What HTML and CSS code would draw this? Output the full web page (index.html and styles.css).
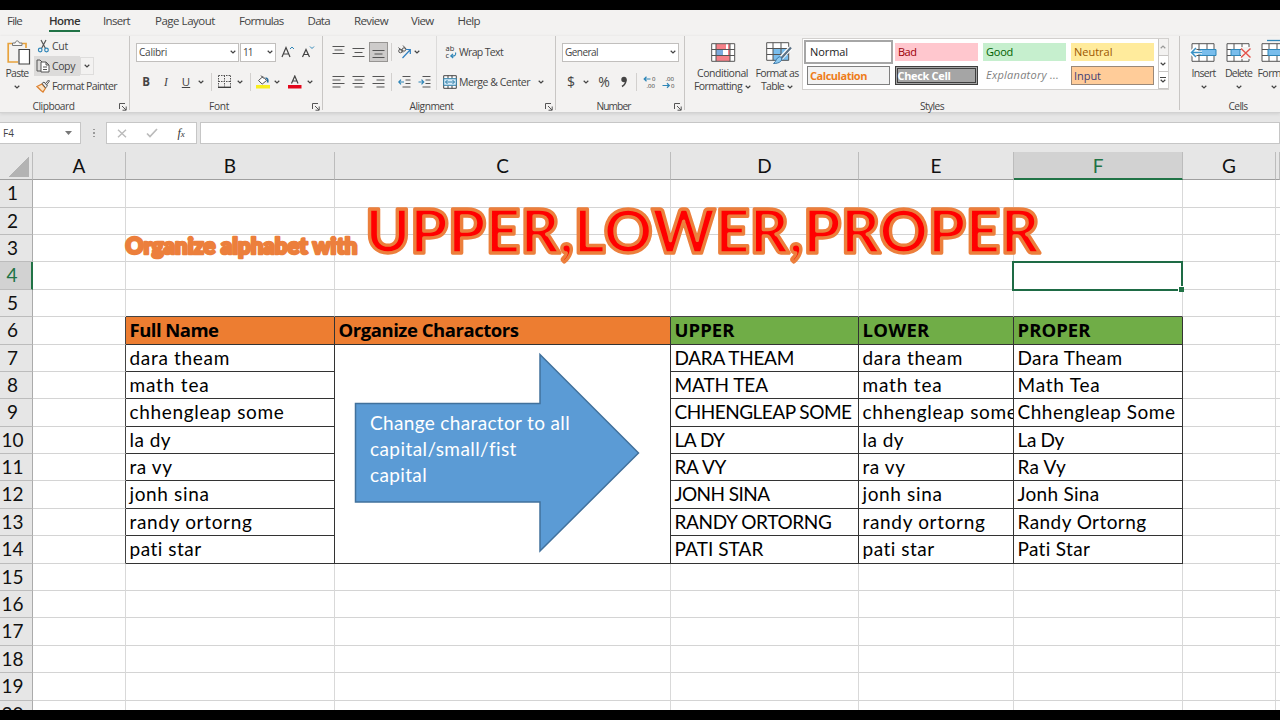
FILE: index.html
```html
<!DOCTYPE html>
<html lang="en">
<head>
<meta charset="utf-8">
<title>Organize alphabet</title>
<link rel="stylesheet" href="styles.css">
</head>
<body>
<svg class="defs" width="0" height="0">
  <symbol id="chev" viewBox="0 0 6 4"><path d="M.7.7 3 2.9 5.3.7" fill="none" stroke="#444" stroke-width="1.2"/></symbol>
  <symbol id="launch" viewBox="0 0 8 8"><path d="M.5 6V.5H6M3 3l4 4M7.2 3.5v3.7H3.500" fill="none" stroke="#555"/></symbol>
</svg>
<div class="screen">
  <nav class="tabs">
    <span data-w="15">File</span><span class="tab-on" data-w="31">Home</span><span class="tab-insert" data-w="27">Insert</span><span class="tab-page" data-w="60">Page Layout</span><span data-w="44.5">Formulas</span><span data-w="22.5">Data</span><span data-w="34">Review</span><span class="tab-view" data-w="22.500">View</span><span data-w="22.500">Help</span>
  </nav>

  <div class="ribbon">
    <section class="group g-clip">
      <div class="body">
        <div class="paste">
          <svg width="24" height="26" viewBox="0 0 24 26"><path d="M5 3.500H1.200V22H11M15 3.500h4V8" fill="none" stroke="#e8a33d" stroke-width="1.700"/><path d="M5.500 5.500V3h2.700C8.500.2 12 .2 12.300 3H15v2.500z" fill="#f7f7f7" stroke="#777"/><path d="M12 9.500h10.500V24H12z" fill="#fff" stroke="#444" stroke-width="1.200"/></svg>
          <span data-w="23">Paste</span>
          <svg class="chev"><use href="#chev"/></svg>
        </div>
        <div class="clip-rows">
          <div class="clip-row"><svg width="14" height="14" viewBox="0 0 14 14"><path d="M5 1l4.500 8.500M10 1 5.500 9.500" fill="none" stroke="#555" stroke-width="1.200"/><g fill="none" stroke="#2f86b8" stroke-width="1.200"><circle cx="4.200" cy="11" r="1.800"/><circle cx="10.500" cy="11" r="1.800"/></g></svg><span data-w="16">Cut</span></div>
          <div class="clip-row copy"><svg width="14" height="14" viewBox="0 0 14 14"><path d="M5 12H1V1h3l2 2" fill="none" stroke="#555"/><path d="M5 3h5l3 3v7H5zM10 3v3h3M7 8h4M7 10.500h4" fill="#fff" stroke="#555"/></svg><span data-w="23">Copy</span><i class="copy-more"><svg class="chev"><use href="#chev"/></svg></i></div>
          <div class="clip-row"><svg width="14" height="14" viewBox="0 0 14 14"><path d="M1 7.500 6 5l3.500 4L7 13 5 11.500z" fill="#fbe3c4" stroke="#dd8230" stroke-width="1.300"/><path d="M6 4.500 8 3l3.500 4-2 1.800zM9.500 4.500 12.500 1l1 1-3 4" fill="#eee" stroke="#555"/></svg><span data-w="65">Format Painter</span></div>
        </div>
      </div>
      <div class="caption"><span data-w="42">Clipboard</span><svg class="launch"><use href="#launch"/></svg></div>
    </section>

    <section class="group g-font">
      <div class="body stack">
        <div class="line font-top">
          <div class="combo"><span data-w="28">Calibri</span><svg class="chev"><use href="#chev"/></svg></div>
          <div class="combo"><span data-w="9.500">11</span><svg class="chev"><use href="#chev"/></svg></div>
          <svg width="14" height="14" viewBox="0 0 14 14"><path d="M1 12 5 2.500 9 12M2.300 9h5.400" fill="none" stroke="#444" stroke-width="1.200"/><path d="M9 4l2-2 2 2" fill="none" stroke="#2f86b8"/></svg>
          <svg width="14" height="14" viewBox="0 0 14 14"><path d="M1.500 12 5 4.500 8.500 12M2.500 9.500h5" fill="none" stroke="#444" stroke-width="1.200"/><path d="M9 1.500l2 2 2-2" fill="none" stroke="#2f86b8"/></svg>
        </div>
        <div class="line font-tools">
          <b>B</b><em>I</em><u>U</u><svg class="chev"><use href="#chev"/></svg><i class="bar"></i>
          <svg width="13" height="13" viewBox="0 0 13 13"><path d="M.5.500h12M.5.500v11M12.500.500v11M6.500.500v11M.5 6.500h12" fill="none" stroke="#555" stroke-dasharray="1.500 1"/><path d="M0 12.300h13" stroke="#333" stroke-width="1.300"/></svg>
          <svg class="chev"><use href="#chev"/></svg><i class="bar"></i>
          <svg width="14" height="14" viewBox="0 0 14 14"><path d="M0 10h14v3.500H0z" fill="#f8ee1f"/><path d="M2.500 5.500 7 1.500l3.500 4-4.300 3.600zM5 .5l2.500 3" fill="#fff" stroke="#555"/><path d="M9.500 3c2 0 2.500 1.500 2.200 4.500" fill="none" stroke="#2b6c99" stroke-width="1.700"/></svg>
          <svg class="chev"><use href="#chev"/></svg>
          <svg width="14" height="14" viewBox="0 0 14 14"><path d="M0 10h13.500v3.500H0z" fill="#e3061b"/><path d="M3.500 8.500 6.800 1 10 8.500M4.500 6h4.600" fill="none" stroke="#444" stroke-width="1.200"/></svg>
          <svg class="chev"><use href="#chev"/></svg>
        </div>
      </div>
      <div class="caption"><span data-w="20">Font</span><svg class="launch"><use href="#launch"/></svg></div>
    </section>

    <section class="group g-align">
      <div class="body">
        <div class="align-left">
          <div class="line align-a">
            <svg width="13" height="14" viewBox="0 0 13 14"><path d="M.5 1.500h12M2.500 5h8M.5 8.500h12" stroke="#555"/></svg>
            <svg width="13" height="14" viewBox="0 0 13 14"><path d="M.5 3.500h12M2.500 7.500h8M.5 11.500h12" stroke="#555"/></svg>
            <i class="pressed"><svg width="13" height="14" viewBox="0 0 13 14"><path d="M.5 5.500h12M2.500 9h8M.5 12.500h12" stroke="#555"/></svg></i>
            <i class="bar"></i>
            <svg width="15" height="14" viewBox="0 0 15 14"><g fill="none" stroke="#555"><circle cx="3.500" cy="6" r="1.800"/><path d="M1.500 2.500 6 7.500M6 .500l4 4.500"/><circle cx="7" cy="4.500" r="1.700"/></g><path d="M5.500 13 13 5M13.300 9V4.500H9" fill="none" stroke="#2f7fc1" stroke-width="1.200"/></svg>
            <svg class="chev"><use href="#chev"/></svg>
          </div>
          <div class="line align-b">
            <svg width="13" height="14" viewBox="0 0 13 14"><path d="M.5 1.500h12M.5 5h8M.5 8.500h12M.5 12h8" stroke="#555"/></svg>
            <svg width="13" height="14" viewBox="0 0 13 14"><path d="M.5 1.500h12M2.500 5h8M.5 8.500h12M2.500 12h8" stroke="#555"/></svg>
            <svg width="13" height="14" viewBox="0 0 13 14"><path d="M.5 1.500h12M4.500 5h8M.5 8.500h12M4.500 12h8" stroke="#555"/></svg>
            <i class="bar"></i>
            <svg width="13" height="14" viewBox="0 0 13 14"><path d="M4.500 1.500h8M7.500 5h5M7.500 8.500h5M4.500 12h8" stroke="#555"/><path d="M6 7H.8M3 4.700.8 7 3 9.300" fill="none" stroke="#2f86b8" stroke-width="1.200"/></svg>
            <svg width="13" height="14" viewBox="0 0 13 14"><path d="M4.500 1.500h8M7.500 5h5M7.500 8.500h5M4.500 12h8" stroke="#555"/><path d="M.5 7h5M3.500 4.700 5.700 7 3.500 9.300" fill="none" stroke="#2f86b8" stroke-width="1.200"/></svg>
          </div>
        </div>
        <div class="align-right">
          <div class="line wrap">
            <svg width="14" height="14" viewBox="0 0 14 14"><text x="2.500" y="6" class="mini">ab</text><text x="2.500" y="12.500" class="mini">c</text><path d="M12.500 7.500c1 3-1 4-4.500 3.500M10 8.800 7.800 11l2.400 2" fill="none" stroke="#2f86b8" stroke-width="1.200"/></svg>
            <span data-w="44">Wrap Text</span>
          </div>
          <div class="line merge">
            <svg width="14" height="14" viewBox="0 0 14 14"><path d="M.7.700h12.600v12.600H.7zM5 .5v3M9 .5v3M5 10.500v3M9 10.500v3" fill="#fff" stroke="#444"/><path d="M.7 3.700h12.600v6.600H.7z" fill="#d8edfa" stroke="#2f7fa8"/><path d="M2.500 7h9M4.500 5 2.500 7l2 2M9.500 5l2 2-2 2" fill="none" stroke="#2f7fa8"/></svg>
            <span data-w="71">Merge &amp; Center</span><svg class="chev"><use href="#chev"/></svg>
          </div>
        </div>
      </div>
      <div class="caption"><span data-w="44">Alignment</span><svg class="launch"><use href="#launch"/></svg></div>
    </section>

    <section class="group g-num">
      <div class="body stack">
        <div class="line"><div class="combo"><span data-w="33">General</span><svg class="chev"><use href="#chev"/></svg></div></div>
        <div class="line num-tools">
          <span class="sym">$</span><svg class="chev"><use href="#chev"/></svg><span class="sym">%</span>
          <svg width="8" height="12" viewBox="0 0 8 12"><circle cx="4" cy="3.500" r="2.700" fill="#444"/><path d="M6 3.500C6 7 4.500 9 2 10.500" fill="none" stroke="#444" stroke-width="1.500"/></svg>
          <i class="bar"></i>
          <svg width="14" height="14" viewBox="0 0 14 14"><text x="9" y="6" class="mini">0</text><text x="3.500" y="13" class="mini">.00</text><path d="M7.500 4H1M3.500 1.800 1.200 4l2.300 2.200" fill="none" stroke="#2f86b8" stroke-width="1.200"/></svg>
          <svg width="14" height="14" viewBox="0 0 14 14"><text x="3.500" y="6" class="mini">.00</text><text x="9" y="13" class="mini">0</text><path d="M.500 10.500h6.500M5 8.300l2.300 2.200L5 12.700" fill="none" stroke="#2f86b8" stroke-width="1.200"/></svg>
        </div>
      </div>
      <div class="caption"><span data-w="34">Number</span><svg class="launch"><use href="#launch"/></svg></div>
    </section>

    <section class="group g-styles">
      <div class="body">
        <div class="big cond">
          <svg width="25" height="22" viewBox="0 0 25 22"><path d="M.7 1.700h23v17.600H.7z" fill="#fff"/><path d="M5 2h10v5H5zM5 14h12v5H5z" fill="#f58088"/><path d="M5 7h7v7H5z" fill="#7ba9dc"/><path d="M17 1.500h2v18h-2z" fill="#f58088"/><path d="M.7 1.700h23v17.600H.7zM.7 7.500h23M.7 13.500h23M5 1.700v17.600M19 1.700v17.600" fill="none" stroke="#555"/></svg>
          <span data-w="51">Conditional</span>
          <span class="more"><span data-w="48">Formatting</span><svg class="chev"><use href="#chev"/></svg></span>
        </div>
        <div class="big fmt">
          <svg width="26" height="24" viewBox="0 0 26 24"><path d="M.7 1.700h22v17.600H.7z" fill="#fff"/><path d="M7 7.500h16v12H7z" fill="#79bdec"/><path d="M.7 1.700h22v17.600H.7zM.7 7.500h22M.7 13.500h22M7 1.700v17.600M15 1.700v17.600" fill="none" stroke="#555"/><path d="M24.500 7 15 17" stroke="#fff" stroke-width="4.500"/><path d="M25 6.500 15 17.500" stroke="#5b7286" stroke-width="2.200"/><path d="M14 15.500c3 1.500 2.500 7-6.500 7 3-2 2.500-6 6.500-7z" fill="#8ecbf2" stroke="#3c78a8"/></svg>
          <span data-w="43">Format as</span>
          <span class="more"><span data-w="23">Table</span><svg class="chev"><use href="#chev"/></svg></span>
        </div>
        <div class="gallery">
          <div class="swatches">
            <span class="sw normal"><span data-w="38">Normal</span></span><span class="sw bad"><span data-w="18.500">Bad</span></span><span class="sw good"><span data-w="27">Good</span></span><span class="sw neutral"><span data-w="38.500">Neutral</span></span>
            <span class="sw calc"><span data-w="57">Calculation</span></span><span class="sw check"><span data-w="53">Check Cell</span></span><span class="sw expl"><span data-w="73">Explanatory ...</span></span><span class="sw input"><span data-w="27">Input</span></span>
          </div>
          <div class="scroller"><i class="off"><svg class="chev flip"><use href="#chev"/></svg></i><i><svg class="chev"><use href="#chev"/></svg></i><i class="last"><svg class="chev"><use href="#chev"/></svg></i></div>
        </div>
      </div>
      <div class="caption"><span data-w="24">Styles</span></div>
    </section>

    <section class="group g-cells">
      <div class="body">
        <div class="big">
          <svg width="27" height="22" viewBox="0 0 27 22"><path d="M2 1.700h22v17.600H2zM9 1.700v17.600M17 1.700v17.600M2 7.500h22M2 13.500h22" fill="#fff" stroke="#555"/><path d="M10 7.500h16v6H10z" fill="#79bdec" stroke="#2f86b8"/><path d="M12 10.500H1.500M6 5.500l-5 5 5 5" fill="none" stroke="#fff" stroke-width="3.500"/><path d="M12 10.500H1.500M6 6l-4.500 4.500L6 15" fill="none" stroke="#3a93c6" stroke-width="1.500"/></svg>
          <span data-w="24">Insert</span><svg class="chev"><use href="#chev"/></svg>
        </div>
        <div class="big">
          <svg width="27" height="22" viewBox="0 0 27 22"><path d="M2 1.700h22v17.600H2zM9 1.700v17.600M17 1.700v17.600M2 7.500h22M2 13.500h22" fill="#fff" stroke="#555"/><path d="M6 7.500h9v6H6z" fill="#79bdec" stroke="#2f86b8"/><path d="M16 5h10v12H16z" fill="#f3f2f1"/><path d="M16 6.500l9.500 9M25.500 6.500l-9.500 9" stroke="#e5534b" stroke-width="1.400"/></svg>
          <span data-w="27">Delete</span><svg class="chev"><use href="#chev"/></svg>
        </div>
        <div class="big">
          <svg width="27" height="26" viewBox="0 -4 27 26"><path d="M2 1.700h22v17.600H2zM9 1.700v17.600M17 1.700v17.600M2 7.500h22M2 13.500h22" fill="#fff" stroke="#555"/><path d="M8 7.500h16v6H8z" fill="#79bdec" stroke="#2f86b8"/><path d="M7 -1.500h18" stroke="#2f86b8" stroke-width="1.300"/></svg>
          <span data-w="32">Format</span><svg class="chev"><use href="#chev"/></svg>
        </div>
      </div>
      <div class="caption"><span data-w="19">Cells</span></div>
    </section>
  </div>

  <div class="formula">
    <div class="namebox"><span data-w="11">F4</span><svg width="7" height="4" viewBox="0 0 7 4"><path d="M0 0h7L3.500 4z" fill="#777"/></svg></div>
    <div class="grip"><i></i><i></i><i></i></div>
    <div class="fx">
      <svg width="10" height="9" viewBox="0 0 10 9"><path d="M1 .7 9 8.300M9 .7 1 8.300" stroke="#bbb" stroke-width="1.400"/></svg>
      <svg width="12" height="10" viewBox="0 0 12 10"><path d="M1 5.500 4 8.500 11 1" fill="none" stroke="#bbb" stroke-width="1.700"/></svg>
      <span class="fx-mark">f<small>x</small></span>
    </div>
    <div class="entry"></div>
  </div>

  <div class="sheet">
    <div class="grid" id="grid"></div>
    <svg class="wordart" width="940" height="80" viewBox="0 0 940 80">
      <text class="wa-small" x="5.500" y="53.500" textLength="232" lengthAdjust="spacingAndGlyphs">Organize alphabet with</text>
      <text class="wa-big" x="245.500" y="53" textLength="674" lengthAdjust="spacingAndGlyphs">UPPER,LOWER,PROPER</text>
    </svg>
    <div class="arrow">
      <svg width="288" height="202" viewBox="0 0 288 202"><path d="M1.500 51.500H186V2.500L284.500 101 186 199V150H1.500z" fill="#5b9bd5" stroke="#41719c" stroke-width="1.500"/></svg>
      <div class="arrow-text"><span data-w="200">Change charactor to all</span><span data-w="146.500">capital/small/fist</span><span data-w="57">capital</span></div>
    </div>
    <div class="cursor"></div>
  </div>
</div>
<script src="sheet.js"></script>
</body>
</html>
```
FILE: styles.css
```css
* { box-sizing: border-box; }
body { margin: 0; background: #000; font-family: "Open Sans", "Noto Sans", sans-serif; font-size: 10.5px; color: #444; overflow: hidden; }
.defs { position: absolute; }
i { font-style: normal; }
svg { display: block; flex: none; }
[data-w] { display: inline-block; white-space: nowrap; flex: none; }
.chev { width: 6px; height: 4px; }
.screen { width: 1280px; height: 720px; border-top: 10px solid #000; border-bottom: 10px solid #000; background: #e6e6e6; overflow: hidden; display: flex; flex-direction: column; }

.tabs { height: 26px; flex: none; display: flex; gap: 24px; padding-left: 7px; background: #f3f2f1; font-size: 11.5px; line-height: 22px; }
.tabs span { height: 22px; }
.tabs .tab-on { margin-left: 3px; font-weight: 600; border-bottom: 2px solid #217346; color: #333; }
.tab-insert, .tab-view { margin-left: -1px; }
.tab-page { margin-left: 1px; }

.ribbon { height: 77px; flex: none; display: flex; background: #f3f2f1; border-bottom: 1px solid #d2d2d2; box-shadow: 0 1px 3px #cfcfcf; }
.group { flex: none; position: relative; display: flex; flex-direction: column; border-right: 1px solid #c8c6c4; height: 74px; }
.body { height: 60px; flex: none; display: flex; }
.stack { flex-direction: column; }
.caption { height: 20px; flex: none; line-height: 20px; text-align: center; font-size: 10.2px; display: flex; justify-content: center; }
.launch { position: absolute; right: 2px; bottom: -1px; width: 8px; height: 8px; }
.g-clip { width: 130px; } .g-font { width: 193px; } .g-align { width: 233px; }
.g-num { width: 129px; } .g-styles { width: 495px; } .g-cells { width: 120px; border: 0; }
.g-clip .caption { padding-right: 22px; }
.g-font .caption { padding-right: 15px; }
.g-align .caption { padding-right: 15px; }
.g-num .caption { padding-right: 14px; }
.g-num .caption, .g-font .caption { padding-left: 1px; }
.g-cells .caption { padding-right: 4px; }

.paste { width: 34px; display: flex; flex-direction: column; align-items: center; padding-top: 4px; }
.paste svg:first-child { margin-left: 3px; }
.paste span { line-height: 15px; margin-top: 0; }
.paste .chev { margin-top: 4px; }
.clip-row { height: 20px; display: flex; align-items: center; padding-left: 2px; }
.clip-row > svg { margin-right: 2px; }
.copy { background: linear-gradient(90deg, #dcdbda 46px, #f3f2f1 46px); width: 61px; }
.copy-more { margin-left: 5px; width: 14px; height: 18px; border: 1px solid #dedddc; display: grid; place-items: center; }

.line { height: 27px; display: flex; align-items: center; flex: none; }
.line:first-child { height: 32px; }
.font-top { padding-left: 6px; }
.combo { height: 19px; background: #fff; border: 1px solid #c1bfbd; display: flex; align-items: center; justify-content: space-between; padding: 0 2px; font-size: 10px; }
.font-top .combo:nth-child(1) { width: 103px; margin-right: 1px; }
.font-top .combo:nth-child(2) { width: 36px; margin-right: 5px; }
.font-top > svg:nth-child(3) { margin-right: 6px; }
.g-num .combo { width: 117px; margin-left: 6px; }
.font-tools, .align-a, .align-b, .num-tools { display: grid; justify-items: center; }
.font-tools { padding-left: 9px; grid-template-columns: 14px 26px 14px 16px 5px 21px 9px 12px 14px 14px 22px 8px; font-size: 11.5px; }
.font-tools em { font-family: "Liberation Serif", serif; }
.align-left { width: 114px; border-right: 1px solid #dcdbda; height: 54px; padding-left: 5px; }
.align-a { grid-template-columns: 20px 20px 20px 7px 19px 6px; }
.align-b { grid-template-columns: 20px 20px 20px 7px 19px 20px; }
.pressed { width: 19px; height: 20px; border: 1px solid #979593; background: #cdcbca; display: grid; place-items: center; }
.bar { width: 1px; height: 18px; background: #d2d0ce; }
.align-right { padding-left: 6px; }
.wrap svg, .merge svg:first-child { margin-right: 2px; }
.merge .chev { margin-left: 8px; }
.mini { font: 6px "Open Sans", sans-serif; fill: #333; }
.wrap .mini { font-size: 7.500px; }
.num-tools { padding-left: 6px; grid-template-columns: 18px 12px 24px 16px 9px 17px 22px; }
.sym { font-size: 14px; line-height: 20px; }

.big { display: flex; flex-direction: column; align-items: center; padding-top: 5px; line-height: 13px; }
.big > svg:first-child { height: 24px; }
.big > span { margin-top: 2px; }
.big > .more { margin-top: 0; }
.more { display: flex; align-items: center; gap: 3px; }
.cond { width: 75px; }
.cond > svg:first-child { margin-left: 1px; }
.fmt { width: 34px; overflow: visible; }
.fmt > svg:first-child { margin-left: 3px; }
.g-cells .big { width: 35px; }
.g-cells .body { padding-left: 6px; }
.g-cells .big > .chev { margin-top: 5px; }
.g-cells .big:nth-child(3) svg:first-child { height: 28px; margin-top: -4px; }
.gallery { margin: 2px 0 0 8px; width: 367px; height: 52px; background: #fff; border: 1px solid #d2d0ce; display: flex; justify-content: space-between; }
.swatches { display: grid; grid-template-columns: repeat(4, 83px); grid-template-rows: 18px 19px; gap: 5px; padding: 4px 4px 4px 3.500px; }
.sw { padding-left: 3.500px; line-height: 17px; font-size: 11px; height: 100%; }
.normal { outline: 2px solid #a6a6a6; outline-offset: 1px; color: #222; }
.bad { background: #ffc7ce; color: #9c0006; }
.good { background: #c6efce; color: #006100; }
.neutral { background: #ffeb9c; color: #9c5700; }
.calc { background: #f2f2f2; border: 1px solid #7f7f7f; color: #ee7d1a; font-weight: 700; padding-left: 2.500px; }
.check { background: #a5a5a5; border: 3px double #3f3f3f; color: #fff; font-weight: 700; line-height: 13px; padding-left: 0; }
.expl { color: #7f7f7f; font-style: italic; }
.input { background: #ffcc99; border: 1px solid #9a8878; color: #3f3f76; padding-left: 2.500px; }
.scroller { width: 11px; display: grid; grid-template-rows: 17px 16px 17px; border-left: 1px solid #c8c6c4; }
.scroller i { display: grid; place-items: center; border-bottom: 1px solid #c8c6c4; }
.scroller .off { background: #f3f2f1; }
.flip { transform: rotate(180deg); opacity: .5; }
.last .chev { border-top: 1px solid #444; height: 6px; padding-top: 1px; }

.formula { height: 39px; flex: none; display: flex; align-items: flex-start; padding-top: 9px; }
.formula > div { height: 22px; }
.namebox, .fx, .entry { background: #fff; border: 1px solid #c6c6c6; }
.namebox { width: 81.500px; border-left: 0; display: flex; align-items: center; justify-content: space-between; padding: 0 8px 0 3px; font-size: 10px; }
.grip { width: 25px; display: flex; flex-direction: column; align-items: center; justify-content: center; gap: 2px; }
.grip i { width: 1.500px; height: 1.500px; background: #999; }
.fx { width: 91px; display: flex; align-items: center; padding-left: 10px; gap: 19px; }
.fx-mark { font: italic 400 12px "Liberation Serif", serif; color: #333; }
.fx-mark small { font-size: 9px; }
.entry { width: 1080px; margin-left: 3px; }

.sheet { position: relative; height: 558px; flex: none; overflow: hidden; }
.grid { display: grid; grid-template-columns: 33px 93px 209px 336px 188px 155px 169px 93px 4px; grid-template-rows: 28.200px repeat(20, 27.400px); font-family: Lato, sans-serif; font-size: 19px; color: #000; }
.cell { background: #fff; border-right: 1px solid #d9d9d9; border-bottom: 1px solid #d4d4d4; padding-left: 3.500px; line-height: 25.500px; white-space: nowrap; overflow: hidden; min-width: 0; }
.head { background: #e6e6e6; border-right: 1px solid #bcbcbc; border-bottom: 1px solid #9f9f9f; text-align: center; line-height: 28px; color: #111; }
.rowhead { background: #e6e6e6; border-right: 1px solid #ababab; border-bottom: 1px solid #bcbcbc; padding-right: 7px; text-align: center; line-height: 26px; color: #111; }
.corner { background: linear-gradient(135deg, transparent 50%, #b3b3b3 50%) 8px 4px / 21px 21px no-repeat #e6e6e6; }
.head.active { background: #d2d2d2; color: #217346; border-bottom: 2px solid #217346; }
.rowhead.active { background: #d2d2d2; color: #217346; border-right: 2px solid #217346; }
.boxed { border-color: #333; }
.edge-right { border-right-color: #444; }
.edge-bottom { border-bottom-color: #444; }
.orange { background: #ed7d31; font-weight: 700; }
.green { background: #70ad47; font-weight: 700; }
.orange, .green { font-family: "Open Sans", sans-serif; font-size: 18.500px; }
.merged { grid-row: 8 / 16; grid-column: 4; }

.wordart { position: absolute; left: 120px; top: 48px; font-family: Lato, sans-serif; font-weight: 900; }
.wordart text { stroke: #ec7f3c; stroke-width: 3.400px; stroke-linejoin: round; }
.wa-small { font-size: 22px; fill: #ec7f3c; }
.wordart .wa-small { stroke-width: 2.600px; }
.wa-big { font-size: 60px; fill: #f00; }
.arrow { position: absolute; left: 354px; top: 200px; }
.arrow-text { position: absolute; left: 16px; top: 58px; display: flex; flex-direction: column; align-items: flex-start; font: 19px/26.200px Lato, sans-serif; color: #fff; }
.cursor { position: absolute; left: 1012px; top: 109px; width: 171px; height: 30px; border: 2px solid #1e6b45; }
.cursor::after { content: ""; position: absolute; right: -3px; bottom: -3px; width: 5px; height: 5px; background: #217346; border-left: 1px solid #fff; border-top: 1px solid #fff; }
```
FILE: sheet.js
```js
const grid = document.getElementById('grid');
const data = {
  6: [['Full Name', 89], ['Organize Charactors', 180], ['UPPER', 60], ['LOWER', 67], ['PROPER', 73]],
  7: [['dara theam', 100.5], null, ['DARA THEAM', 119.5], ['dara theam', 100.5], ['Dara Theam', 105]],
  8: [['math tea', 80], null, ['MATH TEA', 93.5], ['math tea', 80], ['Math Tea', 83]],
  9: [['chhengleap some', 155], null, ['CHHENGLEAP SOME', 177], ['chhengleap some', 155], ['Chhengleap Some', 158]],
  10: [['la dy', 41.5], null, ['LA DY', 50], ['la dy', 41.5], ['La Dy', 46.5]],
  11: [['ra vy', 43], null, ['RA VY', 51.5], ['ra vy', 43], ['Ra Vy', 48.5]],
  12: [['jonh sina', 80], null, ['JONH SINA', 95], ['jonh sina', 80], ['Jonh Sina', 82]],
  13: [['randy ortorng', 123], null, ['RANDY ORTORNG', 157], ['randy ortorng', 123], ['Randy Ortorng', 129]],
  14: [['pati star', 72.5], null, ['PATI STAR', 89], ['pati star', 72.5], ['Pati Star', 73]]
};

function add(cls, row, col, text, width) {
  const el = document.createElement('div');
  el.className = cls;
  el.style.gridRow = row;
  el.style.gridColumn = col;
  if (width) {
    const s = document.createElement('span');
    s.dataset.w = width;
    s.textContent = text;
    el.append(s);
  } else if (text) el.textContent = text;
  grid.append(el);
}

add('head corner', 1, 1);
[...'ABCDEFG', ''].forEach((c, i) => add('head' + (c === 'F' ? ' active' : ''), 1, i + 2, c));
for (let r = 1; r <= 20; r++) {
  add('rowhead' + (r === 4 ? ' active' : ''), r + 1, 1, String(r));
  for (let c = 0; c < 8; c++) {
    const inside = r >= 6 && r <= 14 && c >= 1 && c <= 5;
    if (r >= 7 && r <= 14 && c === 2) continue;
    let cls = 'cell';
    if (inside) cls += ' boxed';
    if (inside && r === 6) cls += c < 3 ? ' orange' : ' green';
    if (c === 0 && r >= 6 && r <= 14) cls += ' edge-right';
    if (r === 5 && c >= 1 && c <= 5) cls += ' edge-bottom';
    const item = inside ? data[r][c - 1] : null;
    add(cls, r + 1, c + 2, item && item[0], item && item[1]);
  }
}
const merged = document.createElement('div');
merged.className = 'cell boxed merged';
grid.append(merged);

document.querySelectorAll('[data-w]').forEach(el => {
  const target = parseFloat(el.dataset.w);
  const natural = el.getBoundingClientRect().width;
  el.style.letterSpacing = (target - natural) / el.textContent.length + 'px';
  el.style.width = target + 'px';
});
```
